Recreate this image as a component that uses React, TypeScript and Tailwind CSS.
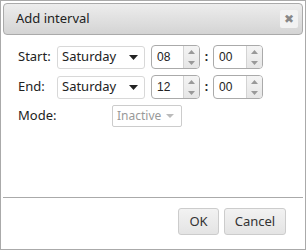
import React from "react";

const font = { fontFamily: '"Noto Sans", "DejaVu Sans", sans-serif' };

function Select({ label, w }: { label: string; w: string }) {
  return (
    <div className={`flex h-[23px] shrink-0 ${w} items-center justify-between rounded-[3px] border border-[#d8d8d8] bg-white pl-[4px] pr-[6px] text-[13px] text-[#222]`}>
      <span>{label}</span>
      <svg width="9" height="5" viewBox="0 0 9 5"><path d="M0 0h9L4.5 5z" fill="#222" /></svg>
    </div>
  );
}

function Spinner({ value, w }: { value: string; w: string }) {
  return (
    <div className={`flex h-[24px] shrink-0 ${w} items-stretch rounded-[4px] border border-[#aaa] bg-white`}>
      <div className="flex flex-1 items-center pl-[5px] text-[12px] text-[#222]" style={{ fontFamily: '"Liberation Sans", Arial, sans-serif' }}>{value}</div>
      <div className="flex w-[16px] flex-col rounded-r-[3px] border-l border-[#d3d3d3] bg-gradient-to-b from-[#f4f4f4] to-[#e6e6e6]">
        <div className="flex flex-1 items-center justify-center">
          <svg width="7" height="4" viewBox="0 0 7 4"><path d="M0 4h7L3.5 0z" fill="#999" /></svg>
        </div>
        <div className="flex flex-1 items-center justify-center">
          <svg width="7" height="4" viewBox="0 0 7 4"><path d="M0 0h7L3.5 4z" fill="#999" /></svg>
        </div>
      </div>
    </div>
  );
}

export default function App() {
  return (
    <div className="h-[250px] w-[306px] bg-white" style={font}>
      <div className="flex h-[250px] w-[306px] flex-col border border-[#aaa] bg-white p-[2px]">
        <div className="flex h-[32px] items-center justify-between rounded-[4px] border border-[#aaa] bg-gradient-to-b from-[#ededed] to-[#d4d4d4] pl-[12px] pr-[4px]">
          <span className="text-[13px] text-[#222]">Add interval</span>
          <div className="flex h-[18px] w-[18px] items-center justify-center rounded-[2px] bg-[#f2f2f2] text-[12px] leading-none text-[#888]">✖</div>
        </div>
        <div className="flex flex-1 flex-col gap-[6px] px-[15px] pt-[10px] text-[13px] text-[#222]">
          <div className="flex items-center">
            <span className="w-[39px] shrink-0">Start:</span>
            <Select label="Saturday" w="w-[88px]" />
            <div className="ml-[6px]"><Spinner value="08" w="w-[49px]" /></div>
            <span className="w-[13px] shrink-0 text-center text-[12px] font-bold">:</span>
            <Spinner value="00" w="w-[50px]" />
          </div>
          <div className="flex items-center">
            <span className="w-[39px] shrink-0">End:</span>
            <Select label="Saturday" w="w-[88px]" />
            <div className="ml-[6px]"><Spinner value="12" w="w-[49px]" /></div>
            <span className="w-[13px] shrink-0 text-center text-[12px] font-bold">:</span>
            <Spinner value="00" w="w-[50px]" />
          </div>
          <div className="flex items-center">
            <span className="w-[94px] shrink-0">Mode:</span>
            <div className="flex h-[22px] w-[70px] shrink-0 items-center justify-between rounded-[2px] border border-[#ccc] bg-white pl-[4px] pr-[7px] text-[12px] text-[#999]">
              <span>Inactive</span>
              <svg width="8" height="4" viewBox="0 0 8 4"><path d="M0 0h8L4 4z" fill="#bbb" /></svg>
            </div>
          </div>
        </div>
        <div className="flex h-[50px] items-start justify-end gap-[5px] border-t border-[#aaa] pr-[17px] pt-[10px]">
          <button className="h-[27px] w-[41px] rounded-[3px] border border-[#ccc] bg-gradient-to-b from-[#f2f2f2] to-[#e4e4e4] text-[13px] text-[#333]">OK</button>
          <button className="h-[27px] w-[62px] rounded-[3px] border border-[#ccc] bg-gradient-to-b from-[#f2f2f2] to-[#e4e4e4] text-[13px] text-[#333]">Cancel</button>
        </div>
      </div>
    </div>
  );
}
